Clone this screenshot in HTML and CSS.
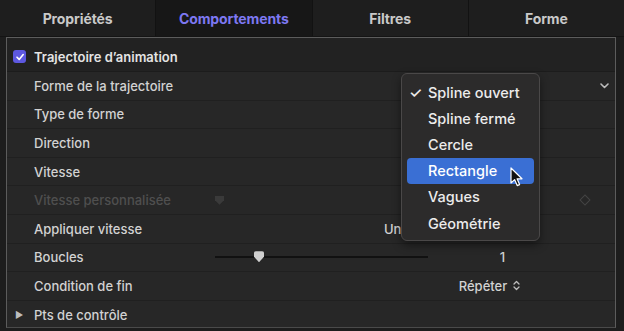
FILE: index.html
```html
<!DOCTYPE html>
<html lang="fr">
<head>
<meta charset="utf-8">
<link rel="stylesheet" href="styles.css">
</head>
<body>
<div class="tabs">
  <div class="tab">Propriétés</div>
  <div class="tab active">Comportements</div>
  <div class="tab">Filtres</div>
  <div class="tab">Forme</div>
</div>
<div class="panel">
  <div class="header">
    <span class="check"><svg width="12" height="12" viewBox="0 0 12 12"><path d="M3 6.2 L5.2 8.4 L9.2 3.6" fill="none" stroke="#fff" stroke-width="1.6" stroke-linecap="round" stroke-linejoin="round"/></svg></span>
    <span class="title">Trajectoire d’animation</span>
  </div>
  <div class="row"><span class="label">Forme de la trajectoire</span><span></span><span></span><span class="end"><svg width="9" height="6" viewBox="0 0 9 6"><path d="M1 1 L4.5 4.5 L8 1" fill="none" stroke="#bdbdbd" stroke-width="1.6" stroke-linecap="round" stroke-linejoin="round"/></svg></span></div>
  <div class="row"><span class="label">Type de forme</span></div>
  <div class="row"><span class="label">Direction</span></div>
  <div class="row"><span class="label">Vitesse</span></div>
  <div class="row"><span class="label dim">Vitesse personnalisée</span><span class="ctl"><span class="dimthumb"></span></span><span></span><span class="mid"><span class="diamond"></span></span></div>
  <div class="row"><span class="label">Appliquer vitesse</span><span class="ctl val uni">Uniforme</span></div>
  <div class="row"><span class="label">Boucles</span><span class="ctl"><span class="track"><span class="thumb"></span></span></span><span class="val num">1</span></div>
  <div class="row"><span class="label">Condition de fin</span><span></span><span class="val rep">Répéter <svg width="7" height="11" viewBox="0 0 7 11"><path d="M1 4 L3.5 1.5 L6 4 M1 7 L3.5 9.5 L6 7" fill="none" stroke="#bdbdbd" stroke-width="1.3" stroke-linecap="round" stroke-linejoin="round"/></svg></span></div>
  <div class="row"><span class="label"><span class="tri">▶</span>Pts de contrôle</span></div>
</div>
<div class="menu">
  <div class="item"><span class="tick">✓</span>Spline ouvert</div>
  <div class="item">Spline fermé</div>
  <div class="item">Cercle</div>
  <div class="item sel">Rectangle</div>
  <div class="item">Vagues</div>
  <div class="item">Géométrie</div>
</div>
<svg class="cursor" width="14" height="21" viewBox="0 0 14 21"><path d="M1 1 L1 16 L4.6 12.6 L7.2 18.6 L9.6 17.6 L7.1 11.8 L12 11.8 Z" fill="#111" stroke="#fff" stroke-width="1.2" stroke-linejoin="round"/></svg>
</body>
</html>
```

FILE: styles.css
```css
* { box-sizing: border-box; }
html, body { margin: 0; padding: 0; }
body {
  width: 624px;
  height: 331px;
  overflow: hidden;
  background: #1d1d1d;
  font-family: Inter, "Noto Sans", "Liberation Sans", sans-serif;
  color: #d6d6d6;
  position: relative;
}
.tabs {
  display: flex;
  height: 37px;
  background: #1e1e1e;
  border-bottom: 1px solid #141414;
}
.tab {
  flex: 1;
  display: flex;
  align-items: center;
  justify-content: center;
  font-size: 14px;
  font-weight: 700;
  color: #c9c9c9;
  border-right: 1px solid #121212;
  letter-spacing: -0.1px;
}
.tab:last-child { border-right: none; }
.tab.active { background: #171717; color: #7d78f2; }
.panel {
  margin: 0 8px 0 6px;
  border: 1px solid #5c5c5c;
  border-bottom-color: #4a4a4a;
  background: #272727;
  height: 291px;
  overflow: hidden;
}
.header {
  height: 34px;
  display: flex;
  align-items: center;
  padding-left: 6px;
  padding-top: 4px;
  background: #222;
  border-bottom: 1px solid #1c1c1c;
}
.check {
  width: 13px;
  height: 13px;
  border-radius: 3px;
  background: #5d58e0;
  display: flex;
  align-items: center;
  justify-content: center;
  margin-right: 8px;
}
.title { font-size: 13px; font-weight: 600; color: #e4e4e4; }
.row {
  height: 28.6px;
  display: grid;
  grid-template-columns: 181px 213px 147px 1fr;
  align-items: center;
  padding-left: 27px;
  border-bottom: 1px solid #202020;
  font-size: 13px;
  font-weight: 500;
}
.label { color: #d2d2d2; position: relative; }
.label.dim { color: #4f4f4f; }
.tri {
  position: absolute;
  left: -19px;
  top: 2px;
  font-size: 9px;
  color: #bdbdbd;
}
.end { display: flex; justify-content: flex-end; padding-right: 6px; }
.mid { display: flex; justify-content: flex-start; padding-left: 6px; }
.ctl { display: flex; align-items: center; }
.uni { padding-left: 169px; white-space: nowrap; color: #d2d2d2; }
.track {
  position: relative;
  width: 213px;
  height: 2px;
  background: #111;
}
.thumb {
  position: absolute;
  left: 39px;
  top: -5px;
  width: 10px;
  height: 11px;
  background: #cfcfcf;
  clip-path: polygon(0 0, 100% 0, 100% 50%, 50% 100%, 0 50%);
  border-radius: 2px;
}
.dimthumb {
  width: 9px;
  height: 9px;
  background: #3a3a3a;
  clip-path: polygon(0 0, 100% 0, 100% 50%, 50% 100%, 0 50%);
}
.diamond {
  width: 8px;
  height: 8px;
  border: 1px solid #444;
  transform: rotate(45deg);
}
.val { color: #d2d2d2; }
.num { text-align: center; padding-left: 2px; }
.rep { display: flex; align-items: center; justify-content: center; gap: 6px; padding-right: 24px; }
.menu {
  position: absolute;
  left: 401px;
  top: 73px;
  width: 139px;
  height: 168px;
  background: #2c2b2b;
  border: 1px solid #4a4848;
  border-radius: 6px;
  padding: 5px 5px;
  box-shadow: 0 4px 10px rgba(0,0,0,0.45);
}
.item {
  height: 26.2px;
  display: flex;
  align-items: center;
  padding-left: 21px;
  font-size: 14.5px;
  font-weight: 500;
  color: #ececec;
  border-radius: 4px;
  position: relative;
}
.item.sel { background: #3a6fd4; color: #fff; }
.tick { position: absolute; left: 2px; font-size: 15px; }
.cursor { position: absolute; left: 510px; top: 167px; }
```
